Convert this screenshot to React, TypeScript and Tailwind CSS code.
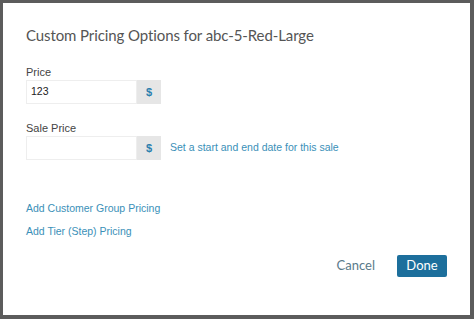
const App = () => {
  return (
    <div className="w-[474px] h-[319px] bg-[#5c5c5c] p-[3px] pr-[4px] pb-[4px]">
      <div className="w-full h-full bg-white flex flex-col px-[23px] pt-[21px] font-['Liberation_Sans',sans-serif]">
        {/* Title */}
        <h2 className="text-[15px] leading-[22px] text-[#555] font-['Lato',sans-serif] tracking-[-0.1px]">
          Custom Pricing Options for abc-5-Red-Large
        </h2>

        {/* Price */}
        <label className="mt-[19px] text-[11px] leading-[14px] text-[#444]">Price</label>
        <div className="mt-[1px] flex items-center">
          <div className="w-[111px] h-[24px] border border-[#eee] flex items-center px-[4px] text-[10.5px] text-[#222]">
            123
          </div>
          <div className="w-[24px] h-[24px] bg-[#e6e6e6] flex items-center justify-center text-[11px] font-bold text-[#2b7fae]">
            $
          </div>
        </div>

        {/* Sale Price */}
        <label className="mt-[17px] text-[11px] leading-[14px] text-[#444]">Sale Price</label>
        <div className="mt-[1px] flex items-center">
          <div className="w-[111px] h-[24px] border border-[#eee]" />
          <div className="w-[24px] h-[24px] bg-[#e6e6e6] flex items-center justify-center text-[11px] font-bold text-[#2b7fae]">
            $
          </div>
          <a className="ml-[9px] text-[10.5px] text-[#3a90b8]">Set a start and end date for this sale</a>
        </div>

        {/* Links */}
        <a className="mt-[41px] text-[10.5px] leading-[14px] text-[#3a90b8]">Add Customer Group Pricing</a>
        <a className="mt-[9px] text-[10.5px] leading-[14px] text-[#3a90b8]">Add Tier (Step) Pricing</a>

        {/* Footer */}
        <div className="mt-[17px] flex justify-end items-center font-['Lato',sans-serif]">
          <button className="text-[13px] text-[#5a7a8a] mr-[22px]">Cancel</button>
          <button className="w-[50px] h-[22px] bg-[#1d6f9c] text-white text-[13px] rounded-[2px]">Done</button>
        </div>
      </div>
    </div>
  );
};

export default App;
